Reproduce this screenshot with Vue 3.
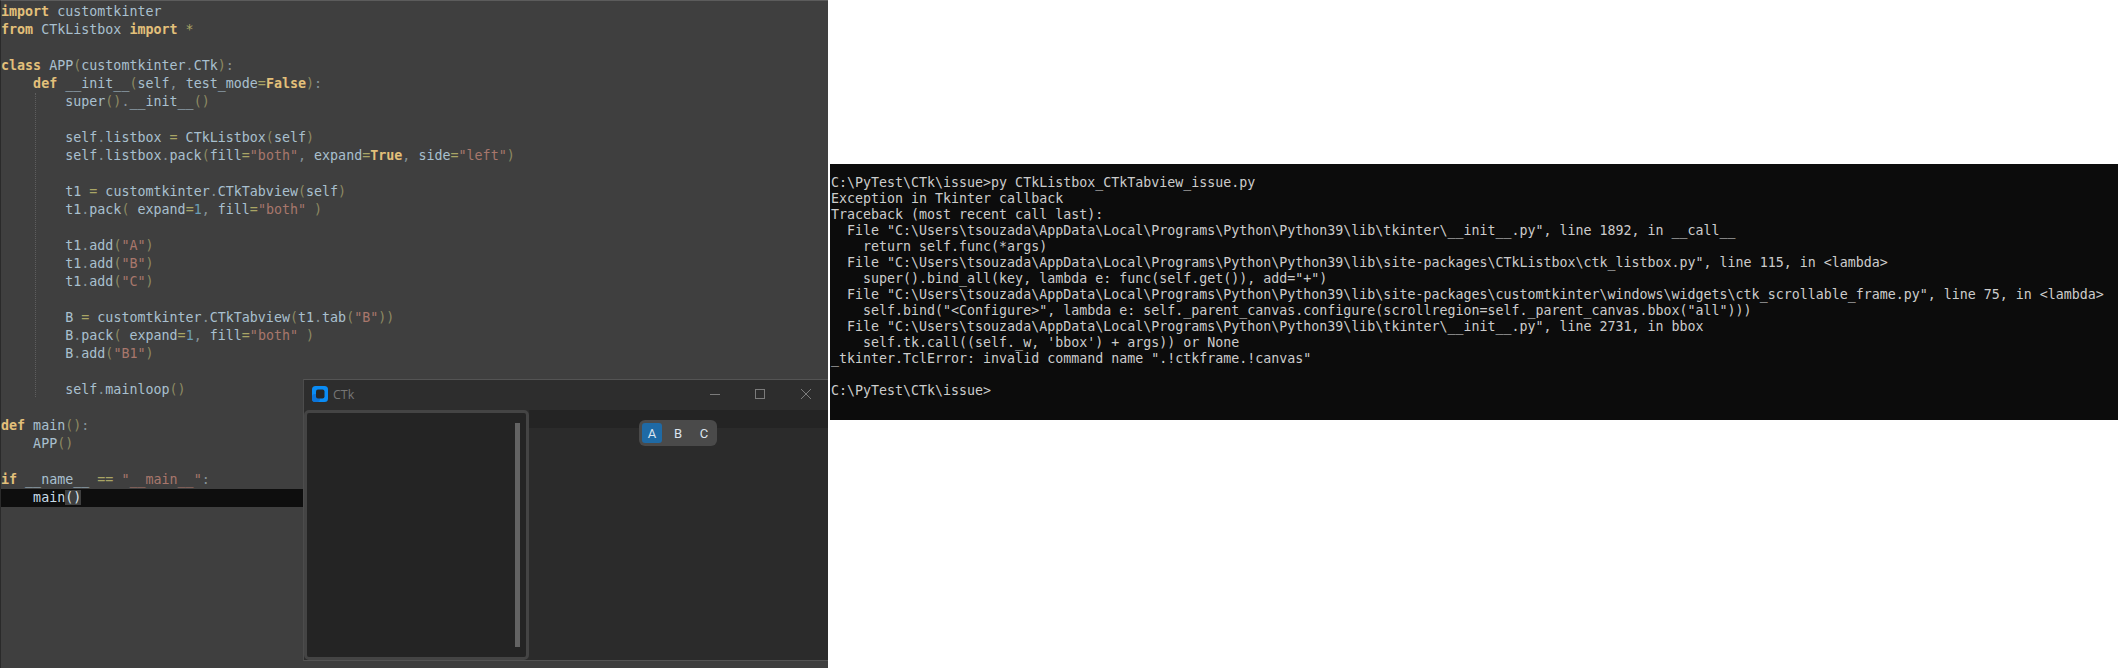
<script setup>
const source = [
  'import customtkinter',
  'from CTkListbox import *',
  '',
  'class APP(customtkinter.CTk):',
  '    def __init__(self, test_mode=False):',
  '        super().__init__()',
  '',
  '        self.listbox = CTkListbox(self)',
  '        self.listbox.pack(fill="both", expand=True, side="left")',
  '',
  '        t1 = customtkinter.CTkTabview(self)',
  '        t1.pack( expand=1, fill="both" )',
  '',
  '        t1.add("A")',
  '        t1.add("B")',
  '        t1.add("C")',
  '',
  '        B = customtkinter.CTkTabview(t1.tab("B"))',
  '        B.pack( expand=1, fill="both" )',
  '        B.add("B1")',
  '',
  '        self.mainloop()',
  '',
  'def main():',
  '    APP()',
  '',
  'if __name__ == "__main__":',
  '    main()',
]

const keywords = new Set(['import', 'from', 'class', 'def', 'if', 'True', 'False'])

function kindOf(text) {
  if (text.startsWith('"')) return 'str'
  if (keywords.has(text)) return 'kw'
  if (/^\d+$/.test(text)) return 'num'
  if (/^[()]$/.test(text)) return 'paren'
  if (/^[=*]+$/.test(text)) return 'op'
  if (/^[.,:]$/.test(text)) return 'punct'
  return 'id'
}

const lines = source.map((line, index) => ({
  id: index,
  current: index === 27,
  tokens: (line.match(/"[^"]*"|\w+|\s+|./g) || []).map((text) => ({ text, kind: kindOf(text) })),
}))

const consoleLines = [
  'C:\\PyTest\\CTk\\issue>py CTkListbox_CTkTabview_issue.py',
  'Exception in Tkinter callback',
  'Traceback (most recent call last):',
  '  File "C:\\Users\\tsouzada\\AppData\\Local\\Programs\\Python\\Python39\\lib\\tkinter\\__init__.py", line 1892, in __call__',
  '    return self.func(*args)',
  '  File "C:\\Users\\tsouzada\\AppData\\Local\\Programs\\Python\\Python39\\lib\\site-packages\\CTkListbox\\ctk_listbox.py", line 115, in <lambda>',
  '    super().bind_all(key, lambda e: func(self.get()), add="+")',
  '  File "C:\\Users\\tsouzada\\AppData\\Local\\Programs\\Python\\Python39\\lib\\site-packages\\customtkinter\\windows\\widgets\\ctk_scrollable_frame.py", line 75, in <lambda>',
  '    self.bind("<Configure>", lambda e: self._parent_canvas.configure(scrollregion=self._parent_canvas.bbox("all")))',
  '  File "C:\\Users\\tsouzada\\AppData\\Local\\Programs\\Python\\Python39\\lib\\tkinter\\__init__.py", line 2731, in bbox',
  "    self.tk.call((self._w, 'bbox') + args)) or None",
  '_tkinter.TclError: invalid command name ".!ctkframe.!canvas"',
  '',
  'C:\\PyTest\\CTk\\issue>',
]
</script>

<template>
  <div class="page">
    <section class="editor">
      <span class="guide"></span>
      <div v-for="line in lines" :key="line.id" class="code-line" :class="{ current: line.current }">
        <span
          v-for="(token, i) in line.tokens"
          :key="i"
          :class="[token.kind, { match: line.current && token.kind === 'paren' }]"
        >{{ token.text }}</span>
      </div>

      <div class="window">
        <header class="titlebar">
          <svg class="logo" width="16" height="16" viewBox="0 0 16 16">
            <rect width="16" height="16" rx="3.5" fill="#0a8cf5" />
            <rect x="0" y="8" width="8" height="8" rx="3" fill="#0b74da" />
            <rect x="4" y="3.5" width="8.5" height="9" rx="2" fill="#262626" />
          </svg>
          <span class="title">CTk</span>
          <svg class="controls" width="101" height="10" viewBox="0 0 101 10" fill="none" stroke="#7b7b7b" stroke-width="1">
            <path d="M0 5.5H10" />
            <rect x="45.5" y="0.5" width="9" height="9" />
            <path d="M91 0L101 10M101 0L91 10" />
          </svg>
        </header>
        <div class="window-body">
          <div class="listbox">
            <div class="scrollbar"></div>
          </div>
          <div class="tabview">
            <div class="tab-band"></div>
            <div class="segments">
              <span class="segment active">A</span>
              <span class="segment">B</span>
              <span class="segment">C</span>
            </div>
          </div>
        </div>
      </div>
    </section>

    <section class="console">
      <div v-for="(line, i) in consoleLines" :key="i" class="console-line">{{ line }}</div>
    </section>
  </div>
</template>

<style>
html, body { margin: 0; background: #fff; }
</style>

<style scoped>
.page {
  display: flex;
  width: 2118px;
  height: 668px;
  overflow: hidden;
  background: #fff;
}

.editor {
  position: relative;
  flex: 0 0 828px;
  box-sizing: border-box;
  height: 668px;
  padding-top: 2px;
  background: #3f3f3f;
  border-top: 1px solid #5c5c5c;
  border-left: 1px solid #2a2a2a;
  font: 13.33px/18px "DejaVu Sans Mono", monospace;
  color: #a9c0cf;
  overflow: hidden;
}
.guide {
  position: absolute;
  left: 34px;
  top: 92px;
  height: 304px;
  border-left: 1px dotted #5e5e5e;
}
.code-line { height: 18px; white-space: pre; }
.code-line.current { background: #0e0e0e; color: #c8dbe6; }
.kw { color: #e3c07a; font-weight: 700; }
.str { color: #a8776c; }
.num { color: #6b9fb8; }
.paren { color: #8d8a62; }
.op { color: #a9a565; }
.punct { color: #86939a; }
.match { background: #3f3f3f; color: #d8e4ec; }

.window {
  position: absolute;
  left: 302px;
  top: 378px;
  width: 525px;
  height: 282px;
  display: flex;
  flex-direction: column;
  box-sizing: border-box;
  background: #2b2b2b;
  border-top: 1px solid #545454;
  border-bottom: 1px solid #545454;
  border-left: 1px solid #4c4c4c;
}
.titlebar {
  display: flex;
  align-items: center;
  flex: 0 0 30px;
  box-sizing: border-box;
  padding: 0 0 2px 8px;
  background: #2d2d2d;
}
.logo { margin-right: 5px; }
.title {
  font: 12.5px "Open Sans", sans-serif;
  color: #767676;
}
.controls { margin-left: auto; margin-right: 17px; }
.window-body { flex: 1; display: flex; min-height: 0; }
.listbox {
  display: flex;
  justify-content: flex-end;
  flex: 0 0 225px;
  box-sizing: border-box;
  padding: 10px 6px 10px 0;
  background: #242424;
  border: 3px solid #444;
  border-radius: 5px;
}
.scrollbar { width: 5px; background: #636363; }
.tabview { position: relative; flex: 1; background: #2b2b2b; }
.tab-band { height: 18px; background: #242424; }
.segments {
  position: absolute;
  left: 110px;
  top: 10px;
  display: flex;
  box-sizing: border-box;
  height: 26px;
  width: 78px;
  padding: 3px;
  background: #4a4a4a;
  border-radius: 6px;
}
.segment {
  flex: 0 0 26px;
  display: flex;
  align-items: center;
  justify-content: center;
  font: 13px Roboto, sans-serif;
  color: #dce4ee;
  border-radius: 3px;
}
.segment.active { flex: 0 0 20px; margin-right: 3px; background: #1f6aa5; }

.console {
  flex: 1;
  box-sizing: border-box;
  height: 256px;
  margin: 164px 0 0 2px;
  padding: 11px 0 0 1px;
  background: #0c0c0c;
  color: #cccccc;
  font: 13.3px/16px "DejaVu Sans Mono", monospace;
}
.console-line { height: 16px; white-space: pre; }
</style>
